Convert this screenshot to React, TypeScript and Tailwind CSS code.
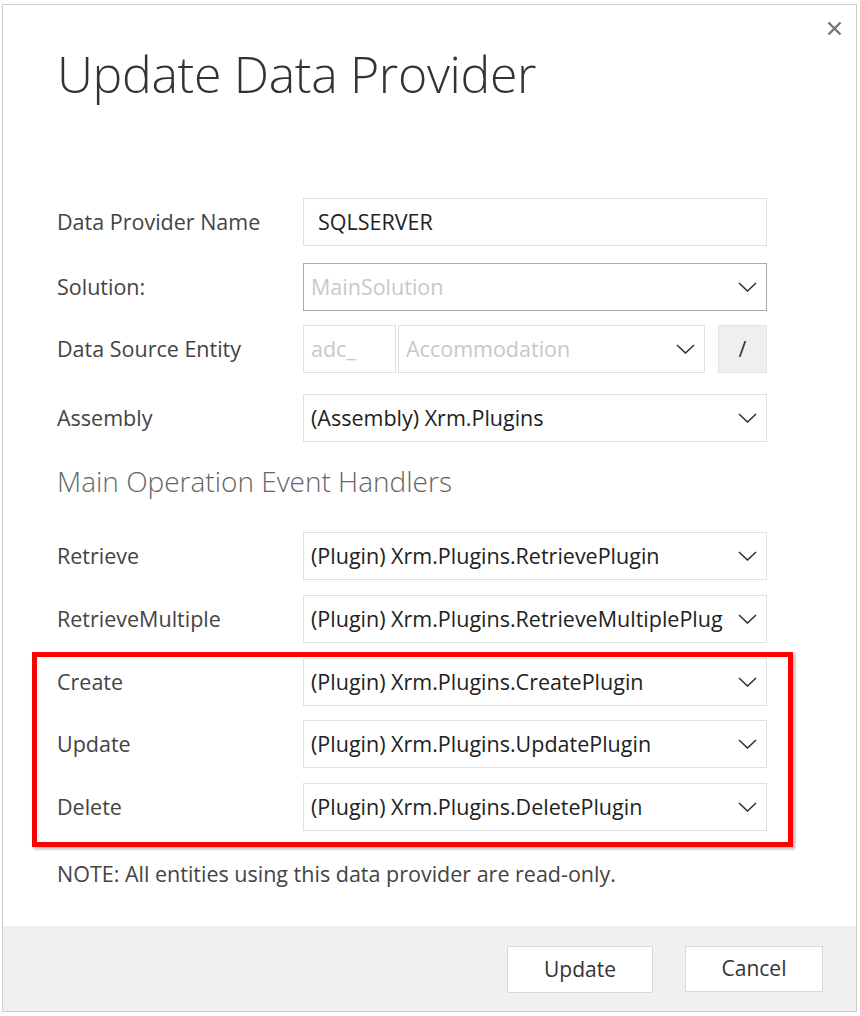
import React from "react";

const Chevron = () => (
  <svg width="19" height="10" viewBox="0 0 19 10" fill="none">
    <path d="M1 1 L9.5 9 L18 1" stroke="#333" strokeWidth="1.6" />
  </svg>
);

const Label = ({ children }: { children: React.ReactNode }) => (
  <div className="w-[246px] shrink-0 text-[21.5px] text-[#444] leading-normal">{children}</div>
);

const Select = ({ value, disabled, dark }: { value: string; disabled?: boolean; dark?: boolean }) => (
  <div
    className={`flex-1 min-w-0 h-[48px] flex items-center pl-[7px] pr-[9px] bg-white border ${
      dark ? "border-[#ababab]" : "border-[#e0e0e0]"
    }`}
  >
    <span
      className={`flex-1 min-w-0 text-[21.5px] whitespace-nowrap overflow-hidden ${
        disabled ? "text-[#c8c8c8]" : "text-[#222]"
      }`}
    >
      {value}
    </span>
    <span className="shrink-0 ml-[12px] flex items-center">
      <Chevron />
    </span>
  </div>
);

const Row = ({ label, children, className = "" }: { label: string; children: React.ReactNode; className?: string }) => (
  <div className={`flex items-center h-[48px] ${className}`}>
    <Label>{label}</Label>
    <div className="flex-1 min-w-0 flex h-[48px]">{children}</div>
  </div>
);

export default function App() {
  return (
    <div className="w-[860px] h-[1016px] bg-white overflow-hidden" style={{ fontFamily: '"Open Sans", "Noto Sans", sans-serif' }}>
      <div className="ml-[2px] mt-[4px] w-[855px] h-[1008px] border border-[#cccccc] flex flex-col relative">
        <div className="absolute top-[16px] right-[14px]">
          <svg width="15" height="15" viewBox="0 0 15 15">
            <path d="M1.5 1.5 L13.5 13.5 M13.5 1.5 L1.5 13.5" stroke="#777" strokeWidth="2.4" />
          </svg>
        </div>
        <div className="flex-1 pl-[54px]">
          <div className="h-[193px] pt-[44px]">
            <h1 className="text-[50px] leading-none font-light tracking-[-0.35px] text-[#333]">Update Data Provider</h1>
          </div>
          <div className="w-[710px] flex flex-col">
            <Row label="Data Provider Name">
              <div className="flex-1 flex items-center pl-[14px] border border-[#e0e0e0] bg-white text-[21.5px] text-[#222]">
                SQLSERVER
              </div>
            </Row>
            <Row label="Solution:" className="mt-[17px]">
              <Select value="MainSolution" disabled dark />
            </Row>
            <Row label="Data Source Entity" className="mt-[14px]">
              <div className="w-[93px] flex items-center pl-[7px] border border-[#e0e0e0] text-[21.5px] text-[#c8c8c8]">adc_</div>
              <div className="w-[307px] ml-[2px] flex">
                <Select value="Accommodation" disabled />
              </div>
              <div className="ml-[13px] w-[49px] flex items-center justify-center bg-[#efefef] border border-[#e2e2e2] text-[21.5px] text-[#333]">
                /
              </div>
            </Row>
            <Row label="Assembly" className="mt-[21px]">
              <Select value="(Assembly) Xrm.Plugins" />
            </Row>
            <div className="mt-[25px] text-[28px] leading-none font-light text-[#666]">Main Operation Event Handlers</div>
            <Row label="Retrieve" className="mt-[37px]">
              <Select value="(Plugin) Xrm.Plugins.RetrievePlugin" />
            </Row>
            <Row label="RetrieveMultiple" className="mt-[15px]">
              <Select value="(Plugin) Xrm.Plugins.RetrieveMultiplePlug" />
            </Row>
            <div className="relative mt-[15px] flex flex-col">
              <Row label="Create">
                <Select value="(Plugin) Xrm.Plugins.CreatePlugin" />
              </Row>
              <Row label="Update" className="mt-[14px]">
                <Select value="(Plugin) Xrm.Plugins.UpdatePlugin" />
              </Row>
              <Row label="Delete" className="mt-[15px]">
                <Select value="(Plugin) Xrm.Plugins.DeletePlugin" />
              </Row>
              <div className="absolute -left-[25px] -top-[6px] -right-[26px] -bottom-[16px] border-[5px] border-[#ff0000] shadow-[2px_2px_3px_rgba(0,0,0,0.3)] pointer-events-none" />
            </div>
            <div className="mt-[32px] text-[21.5px] leading-none text-[#444]">
              NOTE: All entities using this data provider are read-only.
            </div>
          </div>
        </div>
        <div className="h-[85px] bg-[#f0f0f0] flex items-center justify-end pr-[33px] gap-[32px]">
          <button className="w-[146px] h-[47px] mt-[2px] bg-white border border-[#dadada] text-[21px] text-[#333]">Update</button>
          <button className="w-[138px] h-[46px] bg-white border border-[#dadada] text-[21px] text-[#333]">Cancel</button>
        </div>
      </div>
    </div>
  );
}
